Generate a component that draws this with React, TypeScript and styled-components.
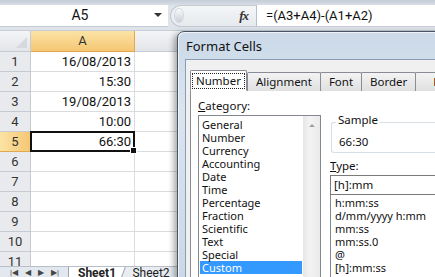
import styled, { createGlobalStyle } from "styled-components"

const GlobalStyle = createGlobalStyle`
    html, body {
        margin: 0;
        padding: 0;
        overflow: hidden;
        background: #ffffff;
    }
`

const cellFont = `Roboto, "Liberation Sans", sans-serif`
const uiFont = `"Noto Sans", "Open Sans", sans-serif`

const rows = ["16/08/2013", "15:30", "19/08/2013", "10:00", "66:30", "", "", "", "", "", ""]
const categories = [
    "General", "Number", "Currency", "Accounting", "Date", "Time",
    "Percentage", "Fraction", "Scientific", "Text", "Special", "Custom",
]
const types = ["h:mm:ss", "d/mm/yyyy h:mm", "mm:ss", "mm:ss.0", "@", "[h]:mm:ss"]
const tabs = ["Number", "Alignment", "Font", "Border", "Fill"]

const Page = styled.div`
    position: relative;
    width: 435px;
    height: 277px;
    overflow: hidden;
    display: flex;
    flex-direction: column;
    background: #ffffff;
    font-family: ${cellFont};
`

const RibbonEdge = styled.div`
    height: 5px;
    background: linear-gradient(#c4ccd6, #d8dee6);
`

const FormulaBar = styled.div`
    height: 22px;
    display: flex;
    align-items: stretch;
    background: #dfe4ea;
    border-bottom: 3px solid #dfe4ea;
`

const NameBox = styled.div`
    width: 168px;
    display: flex;
    align-items: center;
    background: #ffffff;
    border-bottom: 1px solid #c5ccd5;
    font-size: 14px;
    color: #111;
    span {
        flex: 1;
        text-align: center;
        padding-left: 6px;
    }
`

const DropArrow = styled.div`
    width: 0;
    height: 0;
    margin-right: 6px;
    border-left: 4px solid transparent;
    border-right: 4px solid transparent;
    border-top: 4px solid #333;
`

const FxZone = styled.div`
    width: 86px;
    display: flex;
    align-items: center;
    background: linear-gradient(#f4f6f8, #e6e9ed);
    border-radius: 11px 0 0 11px;
    border: 1px solid #c3cad3;
    border-right: none;
    margin-left: 2px;
    box-sizing: border-box;
`

const Grip = styled.div`
    width: 8px;
    height: 13px;
    margin-left: 4px;
    border-radius: 50%;
    background: linear-gradient(#fbfbfc, #c9ced6);
    box-shadow: 0 0 0 1px #d3d8de;
`

const Fx = styled.div`
    margin-left: auto;
    margin-right: 8px;
    font-family: "Liberation Serif", serif;
    font-style: italic;
    font-weight: bold;
    font-size: 13px;
    color: #333;
    letter-spacing: -1px;
`

const FormulaInput = styled.div`
    flex: 1;
    display: flex;
    align-items: center;
    padding-left: 9px;
    background: #ffffff;
    border-left: 1px solid #b8c1cc;
    border-bottom: 1px solid #c5ccd5;
    font-size: 13px;
    color: #111;
`

const Grid = styled.div`
    height: 236px;
    overflow: hidden;
    display: grid;
    grid-template-columns: 31px 104px 1fr;
    grid-auto-rows: 20px;
    grid-template-rows: 21px;
    border-top: 1px solid #c7ced8;
`

const Header = styled.div<{ $active?: boolean }>`
    box-sizing: border-box;
    display: flex;
    align-items: center;
    justify-content: center;
    font-size: 13px;
    color: #333;
    background: ${p => p.$active
        ? "linear-gradient(#fbe3a5, #f5c774)"
        : "linear-gradient(#f4f5f7, #e2e5e9)"};
    border-right: 1px solid ${p => p.$active ? "#e2a94c" : "#c6cbd2"};
    border-bottom: 1px solid ${p => p.$active ? "#e2a94c" : "#c6cbd2"};
`

const Corner = styled(Header)`
    position: relative;
    &::after {
        content: "";
        position: absolute;
        right: 3px;
        bottom: 3px;
        border-left: 11px solid transparent;
        border-bottom: 11px solid #d5d9de;
    }
`

const RowHeader = styled(Header)`
    justify-content: center;
    background: ${p => p.$active
        ? "linear-gradient(90deg, #fbe3a5, #f5c774)"
        : "#e8eaee"};
`

const Cell = styled.div<{ $selected?: boolean }>`
    position: relative;
    box-sizing: border-box;
    display: flex;
    align-items: center;
    justify-content: flex-end;
    padding-right: 3px;
    font-size: 13px;
    color: #111;
    border-right: 1px solid #dadcdd;
    border-bottom: 1px solid #dadcdd;
    ${p => p.$selected && `
        &::after {
            content: "";
            position: absolute;
            left: -1px;
            top: -1px;
            right: -1px;
            bottom: -1px;
            border: 2px solid #111;
        }
        &::before {
            content: "";
            position: absolute;
            right: -3px;
            bottom: -3px;
            width: 5px;
            height: 5px;
            background: #111;
            border: 1px solid #fff;
            z-index: 1;
        }
    `}
`

const TabBar = styled.div`
    flex: 1;
    display: flex;
    align-items: flex-start;
    background: #e3e8ee;
    border-top: 1px solid #b5bec9;
`

const NavButtons = styled.div`
    display: flex;
    gap: 7px;
    padding: 1px 0 0 10px;
    width: 58px;
    font-size: 8px;
    color: #444;
    line-height: 9px;
`

const SheetTab = styled.div<{ $active?: boolean }>`
    height: 10px;
    padding: 0 9px;
    font-size: 12px;
    line-height: 13px;
    overflow: hidden;
    color: #222;
    font-weight: ${p => p.$active ? "bold" : "normal"};
    background: ${p => p.$active ? "#ffffff" : "#e9edf2"};
    border-left: 1px solid #9aa5b2;
    margin-left: ${p => p.$active ? "0" : "-2px"};
    transform: ${p => p.$active ? "none" : "skewX(-20deg)"};
    span { display: inline-block; transform: ${p => p.$active ? "none" : "skewX(20deg)"}; }
`

const Dialog = styled.div`
    position: absolute;
    left: 177px;
    top: 31px;
    width: 280px;
    height: 260px;
    box-sizing: border-box;
    display: flex;
    flex-direction: column;
    padding: 0 0 0 7px;
    border: 1px solid #4a5563;
    border-radius: 7px 0 0 0;
    background: linear-gradient(180deg, #cbd9e8 0%, #d9e4ef 30%, #c9d7e6 100%);
    box-shadow: -3px 2px 6px rgba(0, 0, 0, 0.35), inset 1px 1px 0 #eef3f8;
    font-family: ${uiFont};
`

const TitleBar = styled.div`
    height: 27px;
    display: flex;
    align-items: center;
    padding-left: 1px;
    font-size: 13px;
    color: #111;
`

const Client = styled.div`
    flex: 1;
    background: #f0f0f0;
    border: 1px solid #8b9bb0;
    border-right: none;
    border-bottom: none;
    padding: 10px 0 0 4px;
    display: flex;
    flex-direction: column;
`

const TabStrip = styled.div`
    display: flex;
    align-items: flex-end;
    height: 21px;
    position: relative;
    z-index: 1;
`

const Tab = styled.div<{ $selected?: boolean; $last?: boolean }>`
    box-sizing: border-box;
    height: ${p => p.$selected ? "21px" : "19px"};
    padding: 0 ${p => p.$selected ? "2px" : "5px"};
    padding-left: ${p => p.$last ? "14px" : undefined};
    display: flex;
    align-items: center;
    font-size: 11.5px;
    color: #111;
    border: 1px solid #898c95;
    border-bottom: ${p => p.$selected ? "1px solid #fff" : "none"};
    border-radius: 2px 2px 0 0;
    margin-right: ${p => p.$selected ? "0" : "-1px"};
    background: ${p => p.$selected ? "#ffffff" : "linear-gradient(#f3f3f3, #e0e0e0)"};
    span {
        padding: 0 3px;
        outline: ${p => p.$selected ? "1px dotted #222" : "none"};
        line-height: 14px;
    }
`

const TabPanel = styled.div`
    flex: 1;
    margin-top: -1px;
    background: #ffffff;
    border-top: 1px solid #898c95;
    border-left: 1px solid #898c95;
    display: flex;
    padding: 7px 0 0 7px;
    gap: 9px;
`

const Column = styled.div<{ $width?: string }>`
    display: flex;
    flex-direction: column;
    width: ${p => p.$width || "auto"};
    flex: ${p => p.$width ? "none" : "1"};
`

const Label = styled.div`
    font-size: 11.5px;
    color: #111;
    height: 17px;
    line-height: 16px;
    u { text-decoration: underline; }
`

const ListBox = styled.div`
    flex: 1;
    display: flex;
    border: 1px solid #828790;
    border-bottom: none;
    background: #ffffff;
`

const Items = styled.div`
    flex: 1;
    padding: 2px 1px 0 1px;
`

const Item = styled.div<{ $selected?: boolean }>`
    height: 13px;
    line-height: 13px;
    font-size: 11px;
    padding-left: 2px;
    color: ${p => p.$selected ? "#ffffff" : "#111"};
    background: ${p => p.$selected ? "#3399ff" : "transparent"};
`

const ScrollBar = styled.div`
    width: 17px;
    background: linear-gradient(90deg, #e6e6e6, #f3f3f3 40%, #eaeaea);
    display: flex;
    justify-content: center;
    padding-top: 8px;
    box-sizing: border-box;
`

const UpArrow = styled.div`
    width: 0;
    height: 0;
    border-left: 3px solid transparent;
    border-right: 3px solid transparent;
    border-bottom: 3px solid #9aa0a8;
`

const GroupBox = styled.div`
    position: relative;
    height: 31px;
    margin: 24px 0 0 1px;
    border: 1px solid #d5dfe5;
    border-right: none;
    border-radius: 3px 0 0 3px;
    padding: 12px 0 0 7px;
    box-sizing: border-box;
    font-size: 11.5px;
    color: #111;
    line-height: 14px;
`

const Legend = styled.div`
    position: absolute;
    top: -11px;
    left: 4px;
    padding: 0 2px;
    background: #ffffff;
    font-size: 11.5px;
    line-height: 16px;
`

const TypeLabel = styled(Label)`
    margin-top: 5px;
`

const TypeInput = styled.div`
    height: 20px;
    box-sizing: border-box;
    border: 1px solid #7a7a7a;
    border-right: none;
    padding-left: 3px;
    font-size: 11.5px;
    line-height: 18px;
    color: #111;
`

const TypeList = styled.div`
    flex: 1;
    border-left: 1px solid #828790;
    padding: 1px 0 0 2px;
`

export default function App() {
    return (
        <Page>
            <GlobalStyle />
            <RibbonEdge />
            <FormulaBar>
                <NameBox>
                    <span>A5</span>
                    <DropArrow />
                </NameBox>
                <FxZone>
                    <Grip />
                    <Fx>fx</Fx>
                </FxZone>
                <FormulaInput>=(A3+A4)-(A1+A2)</FormulaInput>
            </FormulaBar>
            <Grid>
                <Corner />
                <Header $active>A</Header>
                <Header>B</Header>
                {rows.map((value, i) => [
                    <RowHeader key={"h" + i} $active={i === 4}>{i + 1}</RowHeader>,
                    <Cell key={"a" + i} $selected={i === 4}>{value}</Cell>,
                    <Cell key={"b" + i} />,
                ])}
            </Grid>
            <TabBar>
                <NavButtons>
                    <span>|◀</span>
                    <span>◀</span>
                    <span>▶</span>
                    <span>▶|</span>
                </NavButtons>
                <SheetTab $active><span>Sheet1</span></SheetTab>
                <SheetTab><span>Sheet2</span></SheetTab>
            </TabBar>

            <Dialog>
                <TitleBar>Format Cells</TitleBar>
                <Client>
                    <TabStrip>
                        {tabs.map((t, i) => (
                            <Tab key={t} $selected={t === "Number"} $last={i === tabs.length - 1}>
                                <span>{t}</span>
                            </Tab>
                        ))}
                    </TabStrip>
                    <TabPanel>
                        <Column $width="123px">
                            <Label><u>C</u>ategory:</Label>
                            <ListBox>
                                <Items>
                                    {categories.map(c => (
                                        <Item key={c} $selected={c === "Custom"}>{c}</Item>
                                    ))}
                                </Items>
                                <ScrollBar><UpArrow /></ScrollBar>
                            </ListBox>
                        </Column>
                        <Column>
                            <GroupBox>
                                <Legend>Sample</Legend>
                                66:30
                            </GroupBox>
                            <TypeLabel><u>T</u>ype:</TypeLabel>
                            <TypeInput>[h]:mm</TypeInput>
                            <TypeList>
                                {types.map(t => <Item key={t}>{t}</Item>)}
                            </TypeList>
                        </Column>
                    </TabPanel>
                </Client>
            </Dialog>
        </Page>
    )
}
